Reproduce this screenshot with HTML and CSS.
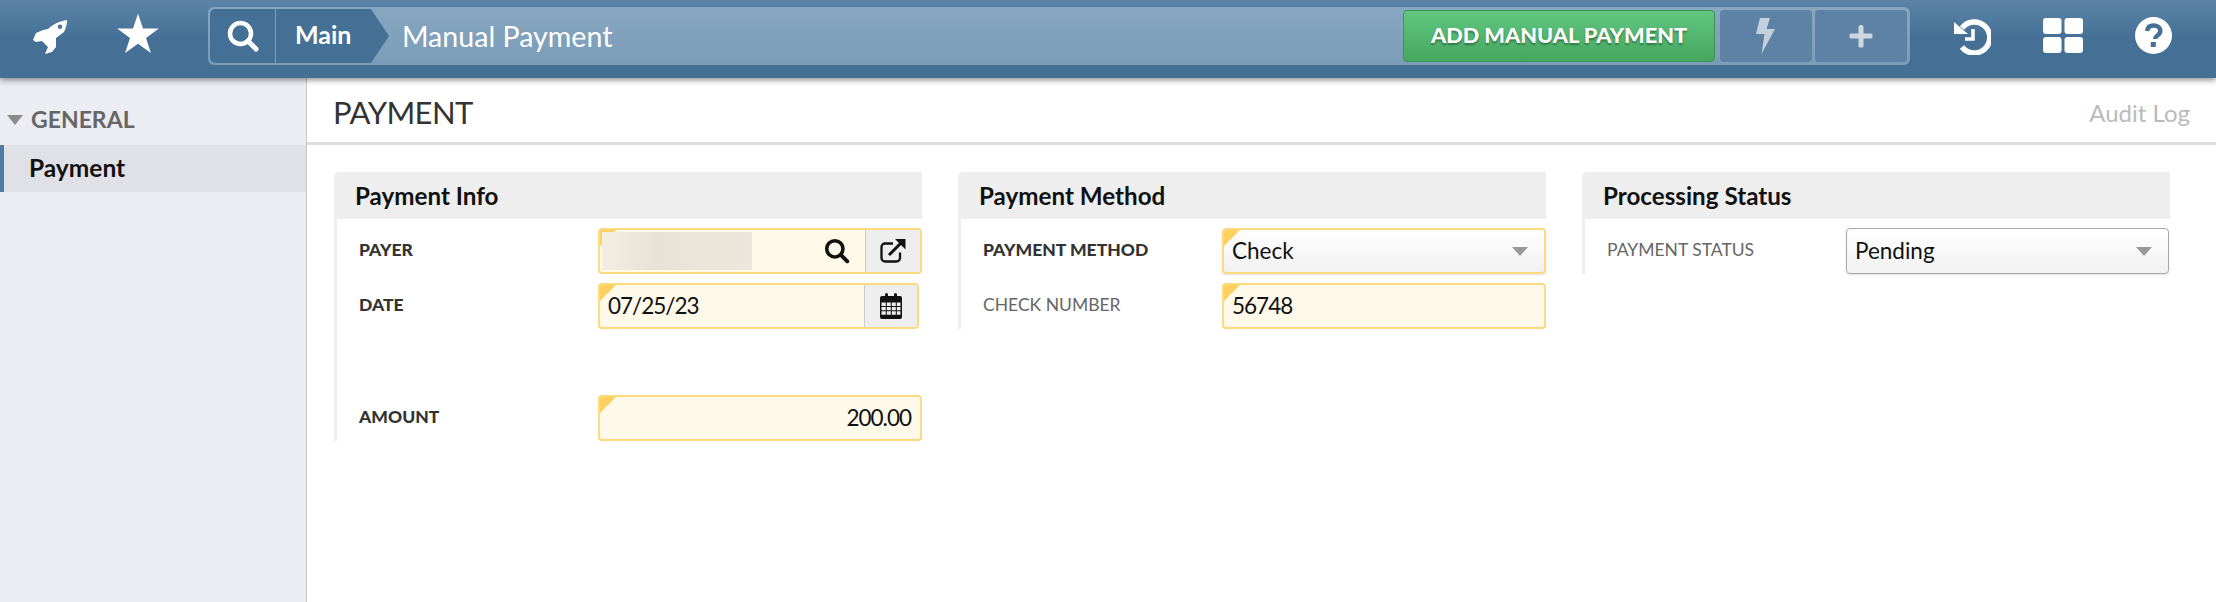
FILE: index.html
```html
<!DOCTYPE html>
<html lang="en">
<head>
<meta charset="utf-8">
<title>Manual Payment</title>
<link rel="stylesheet" href="styles.css">
</head>
<body>
<header class="topbar">
  <div class="quick">
    <svg class="ico-rocket" viewBox="30 18 38 38"><path fill-rule="evenodd" d="M66 20C59 21 52 24 47 29L42 30 L35 33L32 40L35 42L41 41L47 47L44 54L51 52L55 47L55 38L63 32C65 28 66 24 66 20ZM59 24.500A2.300 2.300 0 1 0 59.010 29.100A2.300 2.300 0 1 0 59 24.500Z"/></svg>
    <svg class="ico-star" viewBox="0 0 44 42"><polygon points="22,0 27.200,15.800 43.800,15.800 30.400,25.600 35.500,41.500 22,31.700 8.500,41.500 13.600,25.600 0.200,15.800 16.800,15.800"/></svg>
  </div>
  <div class="crumbbar">
    <div class="crumb-search">
      <svg class="ico-search-w" viewBox="0 0 32 32"><circle cx="13.500" cy="13.500" r="10.500" fill="none" stroke="#fff" stroke-width="4.500"/><path d="M21 21l8 8" stroke="#fff" stroke-width="5" stroke-linecap="round"/></svg>
    </div>
    <div class="crumb-main">Main</div>
    <div class="crumb-page">Manual Payment</div>
    <button class="btn-add">ADD MANUAL PAYMENT</button>
    <div class="btn-mini btn-bolt">
      <svg class="ico-bolt" viewBox="0 0 20 36"><polygon points="4,0 14,0 10.500,11 19,11 5.500,36 8.500,16 0,16"/></svg>
    </div>
    <div class="btn-mini btn-plus">
      <svg class="ico-plus" viewBox="0 0 24 24"><path d="M9.500 2.500a2 2 0 0 1 2-1.500h1a2 2 0 0 1 2 1.500V9.500H22a1.500 1.500 0 0 1 1.500 1.500v2a1.500 1.500 0 0 1-1.500 1.500H14.500V22a1.500 1.500 0 0 1-1.500 1.500h-2A1.500 1.500 0 0 1 9.500 22V14.500H2A1.500 1.500 0 0 1 .5 13v-2A1.500 1.500 0 0 1 2 9.500H9.500Z"/></svg>
    </div>
  </div>
  <div class="tools">
    <svg class="ico-history" viewBox="0 0 37 37"><path d="M8 10A15.500 15.500 0 1 1 8 29" fill="none" stroke="#fff" stroke-width="5.500"/><polygon points="0,4 14,16 0,16"/><path d="M19 11v10h-8" fill="none" stroke="#fff" stroke-width="3.500"/></svg>
    <svg class="ico-grid" viewBox="0 0 40 35"><rect x="0" y="0" width="18.500" height="16" rx="3"/><rect x="21.500" y="0" width="18.500" height="16" rx="3"/><rect x="0" y="19" width="18.500" height="16" rx="3"/><rect x="21.500" y="19" width="18.500" height="16" rx="3"/></svg>
    <svg class="ico-help" viewBox="0 0 37 37"><circle cx="18.500" cy="18.500" r="18.500" fill="#fff"/><path d="M12 14c.5-3.500 3-5.500 6.500-5.500 4 0 6.800 2.300 6.800 5.500 0 4.500-5.300 4.500-5.300 8" fill="none" stroke="#457096" stroke-width="4.500"/><rect x="15.800" y="25" width="5" height="5" fill="#457096"/></svg>
  </div>
</header>

<div class="shell">
  <aside class="sidebar">
    <div class="side-group"><span class="caret-side"></span>GENERAL</div>
    <div class="side-item">Payment</div>
  </aside>

  <main class="content">
    <div class="title-row">
      <h1 class="title">PAYMENT</h1>
      <a class="audit">Audit Log</a>
    </div>
    <div class="panels">
      <section class="panel">
        <h2 class="panel-head">Payment Info</h2>
        <div class="panel-body">
          <div class="row">
            <label class="lbl req">PAYER</label>
            <div class="field field-group">
              <div class="redact"></div>
              <svg class="ico-search" viewBox="0 0 24 24"><circle cx="10" cy="10" r="7.500" fill="none" stroke="#111" stroke-width="3.300"/><path d="M15.500 15.500l6 6" stroke="#111" stroke-width="3.600" stroke-linecap="round"/></svg>
              <div class="addon">
                <svg class="ico-ext" viewBox="0 0 26 24"><path d="M20 13.500V19a3.500 3.500 0 0 1-3.500 3.500H5A3.500 3.500 0 0 1 1.500 19V8A3.500 3.500 0 0 1 5 4.500h8" fill="none" stroke="#111" stroke-width="2.300"/><path d="M9 16L22 3" stroke="#111" stroke-width="3"/><polygon points="15,0 25.500,0 25.500,10.500" fill="#111"/></svg>
              </div>
            </div>
          </div>
          <div class="row">
            <label class="lbl req">DATE</label>
            <div class="field field-group field-date">
              <span class="val num">07/25/23</span>
              <div class="addon">
                <svg class="ico-cal" viewBox="0 0 24 26"><path fill="#111" d="M3 3h3V1.500a1.500 1.500 0 0 1 3 0V3h6V1.500a1.500 1.500 0 0 1 3 0V3h3a2 2 0 0 1 2 2v19a2 2 0 0 1-2 2H3a2 2 0 0 1-2-2V5a2 2 0 0 1 2-2Z"/><path fill="#eee" d="M2.500 9.500h4.300v3.400H2.500zM7.800 9.500h4v3.400h-4zM12.800 9.500h4v3.400h-4zM17.800 9.500h3.700v3.400h-3.700zM2.500 13.900h4.300v3.400H2.500zM7.800 13.900h4v3.400h-4zM12.800 13.900h4v3.400h-4zM17.800 13.900h3.700v3.400h-3.700zM2.500 18.300h4.300v3.400H2.500zM7.800 18.300h4v3.400h-4zM12.800 18.300h4v3.400h-4zM17.800 18.300h3.700v3.400h-3.700z"/></svg>
              </div>
            </div>
          </div>
          <div class="row-spacer"></div>
          <div class="row row-last">
            <label class="lbl req">AMOUNT</label>
            <div class="field field-amount"><span class="val num">200.00</span></div>
          </div>
        </div>
      </section>

      <section class="panel">
        <h2 class="panel-head">Payment Method</h2>
        <div class="panel-body">
          <div class="row">
            <label class="lbl req">PAYMENT METHOD</label>
            <div class="field field-select"><span class="val">Check</span><span class="caret"></span></div>
          </div>
          <div class="row row-last">
            <label class="lbl">CHECK NUMBER</label>
            <div class="field"><span class="val num">56748</span></div>
          </div>
        </div>
      </section>

      <section class="panel">
        <h2 class="panel-head">Processing Status</h2>
        <div class="panel-body">
          <div class="row row-last">
            <label class="lbl">PAYMENT STATUS</label>
            <div class="field field-select field-plain"><span class="val">Pending</span><span class="caret"></span></div>
          </div>
        </div>
      </section>
    </div>
  </main>
</div>
</body>
</html>
```
FILE: styles.css
```css
* { box-sizing: border-box; }
html, body { margin: 0; height: 100%; }
body {
  font-family: "Lato", "Noto Sans", sans-serif;
  color: #111;
  background: #fff;
  display: flex;
  flex-direction: column;
  overflow: hidden;
}
.topbar {
  height: 78px;
  flex: none;
  display: flex;
  align-items: flex-start;
  background: linear-gradient(#5b84a6 0, #457096 38px, #457096 100%);
  box-shadow: 0 2px 6px rgba(0,0,0,.45);
  position: relative;
  z-index: 2;
}
.topbar svg { fill: #fff; display: block; }
.quick {
  width: 208px;
  flex: none;
  height: 78px;
  display: flex;
  align-items: flex-start;
  padding: 13px 0 0 31px;
  gap: 48px;
}
.ico-rocket { width: 38px; height: 38px; margin-top: 5px; }
.ico-star { width: 42px; height: 41px; }
.crumbbar {
  width: 1702px;
  flex: none;
  height: 58px;
  margin-top: 7px;
  padding: 2px 3px 2px 2px;
  border-radius: 6px;
  background: linear-gradient(#88a6bf, #7b9cb8);
  display: flex;
  align-items: center;
}
.crumb-search {
  width: 66px;
  height: 54px;
  flex: none;
  background: #457096;
  border-radius: 5px 0 0 5px;
  border-right: 1px solid #7b9cb8;
  display: flex;
  align-items: center;
  justify-content: center;
}
.ico-search-w { width: 32px; height: 32px; }
.crumb-main {
  width: 113px;
  height: 54px;
  flex: none;
  background: #457096;
  color: #fff;
  font-weight: 700;
  font-size: 25px;
  line-height: 50px;
  padding-left: 19px;
  clip-path: polygon(0 0, 84% 0, 100% 50%, 84% 100%, 0 100%);
}
.crumb-page {
  flex: 1;
  color: #fff;
  font-size: 28.600px;
  padding-left: 13px;
  line-height: 52px;
}
.btn-add {
  width: 312px;
  height: 52px;
  flex: none;
  border: 1px solid #3c9455;
  border-radius: 4px;
  background: linear-gradient(#60c680, #45a760);
  color: #fff;
  font-family: inherit;
  font-weight: 900;
  font-size: 21.700px;
  padding: 0 0 3px;
  text-shadow: 0 2px 2px rgba(0,0,0,.35);
}
.btn-mini {
  height: 52px;
  flex: none;
  background: #5e82a6;
  border-radius: 4px;
  display: flex;
  align-items: center;
  justify-content: center;
}
.btn-bolt { width: 92px; margin-left: 5px; }
.btn-plus { width: 92px; margin-left: 3px; }
.topbar .ico-bolt { width: 20px; height: 36px; fill: #c3cfdc; }
.topbar .ico-plus { width: 24px; height: 24px; fill: #ccd7e2; }
.tools {
  flex: 1;
  display: flex;
  align-items: flex-start;
  padding: 18px 44px 0 44px;
  justify-content: space-between;
}
.ico-history { width: 37px; height: 37px; }
.ico-grid { width: 40px; height: 35px; }
.ico-help { width: 37px; height: 37px; margin-top: -1px; }

.shell { flex: 1; display: flex; min-height: 0; }
.sidebar {
  width: 307px;
  flex: none;
  background: #ecedf3;
  border-right: 1px solid #c8c8c8;
}
.side-group {
  height: 67px;
  padding: 26px 0 0 31px;
  font-size: 23px;
  font-weight: 700;
  color: #666;
  line-height: 30px;
  position: relative;
}
.caret-side {
  position: absolute;
  left: 7px;
  top: 37px;
  border: 8px solid transparent;
  border-top: 10px solid #8b8b8b;
  border-bottom: 0;
}
.side-item {
  height: 47px;
  background: #e0e1e7;
  border-left: 4px solid #4e7ca3;
  padding-left: 25px;
  font-size: 24.500px;
  font-weight: 700;
  line-height: 46px;
  color: #111;
}
.content { flex: 1; min-width: 0; }
.title-row {
  height: 67px;
  border-bottom: 3px solid #dedede;
  display: flex;
  align-items: flex-start;
  justify-content: space-between;
  padding: 0 26px 0 26px;
}
.title {
  margin: 12px 0 0;
  font-size: 31px;
  font-weight: 400;
  letter-spacing: -.6px;
  line-height: 44px;
  color: #333;
}
.audit {
  font-size: 24px;
  color: #bbb;
  line-height: 30px;
  margin-top: 20px;
}
.panels {
  display: grid;
  grid-template-columns: repeat(3, 588px);
  column-gap: 36px;
  padding: 27px 0 0 27px;
  align-items: start;
}
.panel-head {
  margin: 0;
  height: 47px;
  background: #eee;
  border-radius: 4px 0 0 0;
  padding-left: 21px;
  font-size: 24.200px;
  font-weight: 700;
  line-height: 47px;
  color: #111;
}
.panel-body {
  border-left: 3px solid #eee;
  padding: 9px 0 0 22px;
}
.row {
  display: flex;
  height: 46px;
  margin-bottom: 9px;
}
.row-last { margin-bottom: 0; }
.row-spacer { height: 57px; }
.lbl {
  width: 239px;
  flex: none;
  font-size: 17.500px;
  line-height: 24px;
  padding-top: 10px;
  color: #666;
}
.lbl.req { font-weight: 900; color: #333; }
.field {
  flex: 1;
  min-width: 0;
  height: 46px;
  position: relative;
  display: flex;
  align-items: center;
  border: 2px solid #fdd97f;
  border-radius: 4px;
  background: #fff9ea;
  padding: 0 0 0 8px;
  overflow: hidden;
  font-size: 22.500px;
}
.field::before {
  content: "";
  position: absolute;
  left: 0;
  top: 0;
  border-style: solid;
  border-width: 16px 16px 0 0;
  border-color: #fdd05f transparent transparent transparent;
}
.val { line-height: 30px; }
.num { letter-spacing: -1px; }
.field-group { padding-right: 0; }
.field-date { margin-right: 3px; }
.field-amount { justify-content: flex-end; padding-right: 9px; }
.redact {
  width: 150px;
  height: 38px;
  margin-left: -6px;
  background: linear-gradient(90deg, #f3eee2, #e7e2d5 35%, #ebe6da 70%, #ece7dc);
  position: relative;
  z-index: 1;
}
.ico-search { width: 26px; height: 26px; margin-left: auto; margin-right: 15px; }
.addon {
  width: 55px;
  height: 100%;
  flex: none;
  background: #eee;
  border-left: 1.500px solid #ccc;
  display: flex;
  align-items: center;
  justify-content: center;
}
.field-date .val { flex: 1; }
.field-date .addon { width: 53px; }
.ico-ext { width: 26px; height: 24px; }
.ico-cal { width: 24px; height: 26px; }
.field-select {
  background: linear-gradient(#fff, #f1f1f1);
  justify-content: space-between;
  padding-right: 16px;
  box-shadow: 0 1px 2px rgba(0,0,0,.12);
}
.field-plain { border: 1.500px solid #a9a9a9; width: 323px; flex: none; }
.field-plain::before { display: none; }
.caret {
  border: 8px solid transparent;
  border-top: 9px solid #999;
  border-bottom: 0;
}
```
